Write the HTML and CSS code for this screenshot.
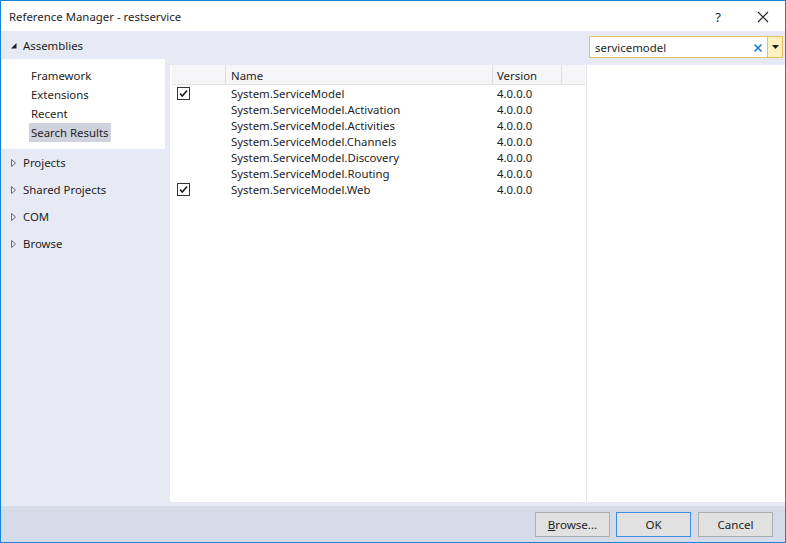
FILE: index.html
```html
<!DOCTYPE html>
<html>
<head>
<meta charset="utf-8">
<link rel="stylesheet" href="styles.css">
</head>
<body>
<div class="window">
  <div class="titlebar">
    <span class="title">Reference Manager - restservice</span>
    <span class="help">?</span>
    <span class="close"><svg width="12" height="12" viewBox="0 0 12 12"><path d="M1 1L11 11M11 1L1 11" stroke="#1e1e1e" stroke-width="1.1" fill="none"/></svg></span>
  </div>
  <div class="main">
    <div class="nav">
      <div class="nav-head"><svg class="tri-open" width="8" height="8" viewBox="0 0 8 8"><polygon points="6.5,1 6.5,6.5 1,6.5" fill="#1e1e1e"/></svg><span>Assemblies</span></div>
      <div class="nav-box">
        <div class="nav-item">Framework</div>
        <div class="nav-item">Extensions</div>
        <div class="nav-item">Recent</div>
        <div class="nav-item selected">Search Results</div>
      </div>
      <div class="nav-group"><svg class="tri" width="8" height="10" viewBox="0 0 8 10"><polygon points="1.5,1.5 5.5,5 1.5,8.5" fill="none" stroke="#6d6d6d" stroke-width="1"/></svg><span>Projects</span></div>
      <div class="nav-group"><svg class="tri" width="8" height="10" viewBox="0 0 8 10"><polygon points="1.5,1.5 5.5,5 1.5,8.5" fill="none" stroke="#6d6d6d" stroke-width="1"/></svg><span>Shared Projects</span></div>
      <div class="nav-group"><svg class="tri" width="8" height="10" viewBox="0 0 8 10"><polygon points="1.5,1.5 5.5,5 1.5,8.5" fill="none" stroke="#6d6d6d" stroke-width="1"/></svg><span>COM</span></div>
      <div class="nav-group"><svg class="tri" width="8" height="10" viewBox="0 0 8 10"><polygon points="1.5,1.5 5.5,5 1.5,8.5" fill="none" stroke="#6d6d6d" stroke-width="1"/></svg><span>Browse</span></div>
    </div>
    <div class="search">
      <div class="search-box">
        <span class="search-text">servicemodel</span>
        <svg class="clear" width="10" height="10" viewBox="0 0 10 10"><path d="M1.5 1.5L8.5 8.5M8.5 1.5L1.5 8.5" stroke="#1e78d2" stroke-width="1.6" fill="none"/></svg>
      </div>
      <div class="search-drop"><svg width="7" height="4" viewBox="0 0 7 4"><polygon points="0,0 7,0 3.5,4" fill="#1e1e1e"/></svg></div>
    </div>
    <div class="list">
      <div class="grid-head">
        <div class="hc c1"></div>
        <div class="hc c2">Name</div>
        <div class="hc c3">Version</div>
        <div class="hc c4"></div>
      </div>
      <div class="row"><div class="c1"><span class="cb"><svg width="11" height="11" viewBox="0 0 11 11"><path d="M2 5.5L4.3 8L9 2.5" stroke="#1e1e1e" stroke-width="1.6" fill="none"/></svg></span></div><div class="c2">System.ServiceModel</div><div class="c3">4.0.0.0</div></div>
      <div class="row"><div class="c1"></div><div class="c2">System.ServiceModel.Activation</div><div class="c3">4.0.0.0</div></div>
      <div class="row"><div class="c1"></div><div class="c2">System.ServiceModel.Activities</div><div class="c3">4.0.0.0</div></div>
      <div class="row"><div class="c1"></div><div class="c2">System.ServiceModel.Channels</div><div class="c3">4.0.0.0</div></div>
      <div class="row"><div class="c1"></div><div class="c2">System.ServiceModel.Discovery</div><div class="c3">4.0.0.0</div></div>
      <div class="row"><div class="c1"></div><div class="c2">System.ServiceModel.Routing</div><div class="c3">4.0.0.0</div></div>
      <div class="row"><div class="c1"><span class="cb"><svg width="11" height="11" viewBox="0 0 11 11"><path d="M2 5.5L4.3 8L9 2.5" stroke="#1e1e1e" stroke-width="1.6" fill="none"/></svg></span></div><div class="c2">System.ServiceModel.Web</div><div class="c3">4.0.0.0</div></div>
    </div>
    <div class="detail"></div>
  </div>
  <div class="footer">
    <button class="btn"><u>B</u>rowse...</button>
    <button class="btn default">OK</button>
    <button class="btn">Cancel</button>
  </div>
</div>
</body>
</html>
```
FILE: styles.css
```css
* { box-sizing: border-box; }
html, body { margin: 0; padding: 0; }
body {
  font-family: "Segoe UI", "Noto Sans", "Open Sans", sans-serif;
  font-size: 11.4px;
  color: #1e1e1e;
  background: #ffffff;
}
.window {
  width: 786px;
  height: 543px;
  border: 1px solid #1883d7;
  display: flex;
  flex-direction: column;
  overflow: hidden;
}
.titlebar {
  height: 30px;
  background: #ffffff;
  display: flex;
  align-items: center;
  padding-left: 8px;
  padding-top: 1px;
}
.title { flex: 1; }
.help { width: 14px; margin-right: 32px; text-align: center; font-size: 13px; }
.close { width: 12px; height: 12px; margin-right: 16px; display: flex; }
.main {
  flex: 1;
  background: #e7eaf5;
  display: grid;
  grid-template-columns: 169px 417px 198px;
  grid-template-rows: 34px 437px 4px;
}
.nav {
  grid-column: 1;
  grid-row: 1 / 4;
}
.nav-head {
  height: 28px;
  display: flex;
  align-items: center;
  padding-left: 9px;
  padding-top: 1px;
}
.tri-open { margin-right: 5px; }
.nav-box {
  margin-left: 1px;
  width: 163px;
  height: 90px;
  background: #ffffff;
  padding-top: 7px;
  padding-left: 27px;
}
.nav-item {
  height: 19px;
  line-height: 19px;
  padding: 0 2px;
  width: max-content;
}
.nav-item.selected { background: #cfd2dc; }
.nav-group {
  height: 27px;
  display: flex;
  align-items: center;
  padding-left: 9px;
}
.tri { margin-right: 5px; }
.search {
  grid-column: 3;
  grid-row: 1;
  display: flex;
  padding: 5px 0 0 2px;
  height: 27px;
}
.search-box {
  width: 179px;
  height: 22px;
  border: 1px solid #e5c365;
  background: #ffffff;
  display: flex;
  align-items: center;
  padding-left: 5px;
  padding-right: 4px;
  padding-top: 1px;
}
.search-text { flex: 1; }
.search-drop {
  width: 15px;
  height: 22px;
  border: 1px solid #e5c365;
  border-left: none;
  background: #fff2c0;
  display: flex;
  align-items: center;
  justify-content: center;
}
.list {
  grid-column: 2;
  grid-row: 2;
  background: #ffffff;
  border-right: 1px solid #e3e5ec;
  padding-left: 2px;
}
.grid-head {
  display: flex;
  height: 20px;
  width: 413px;
  background: #f5f5f7;
  border-bottom: 1px solid #e3e3e6;
}
.hc {
  line-height: 21px;
  border-right: 1px solid #dedee2;
}
.c1 { width: 54px; flex: none; }
.c2 { width: 267px; flex: none; padding-left: 5px; }
.c3 { width: 69px; flex: none; padding-left: 4px; }
.c4 { width: 23px; flex: none; border-right: none; }
.row {
  display: flex;
  height: 16px;
  line-height: 18px;
}
.row .c1 { padding-left: 5px; padding-top: 2px; }
.cb {
  display: flex;
  align-items: center;
  justify-content: center;
  width: 13px;
  height: 13px;
  border: 1px solid #333333;
  background: #ffffff;
}
.detail {
  grid-column: 3;
  grid-row: 2;
  background: #ffffff;
}
.footer {
  height: 36px;
  background: #d6dbe9;
  display: flex;
  justify-content: flex-end;
  align-items: flex-start;
  padding: 6px 12px 0 0;
  gap: 6px;
}
.btn {
  width: 75px;
  height: 25px;
  background: #e1e1e1;
  border: 1px solid #adadad;
  font-family: inherit;
  font-size: 11.6px;
  color: #1e1e1e;
  padding: 0;
  margin: 0;
}
.btn.default { border-color: #3c8ee5; margin-right: 1px; }
```
